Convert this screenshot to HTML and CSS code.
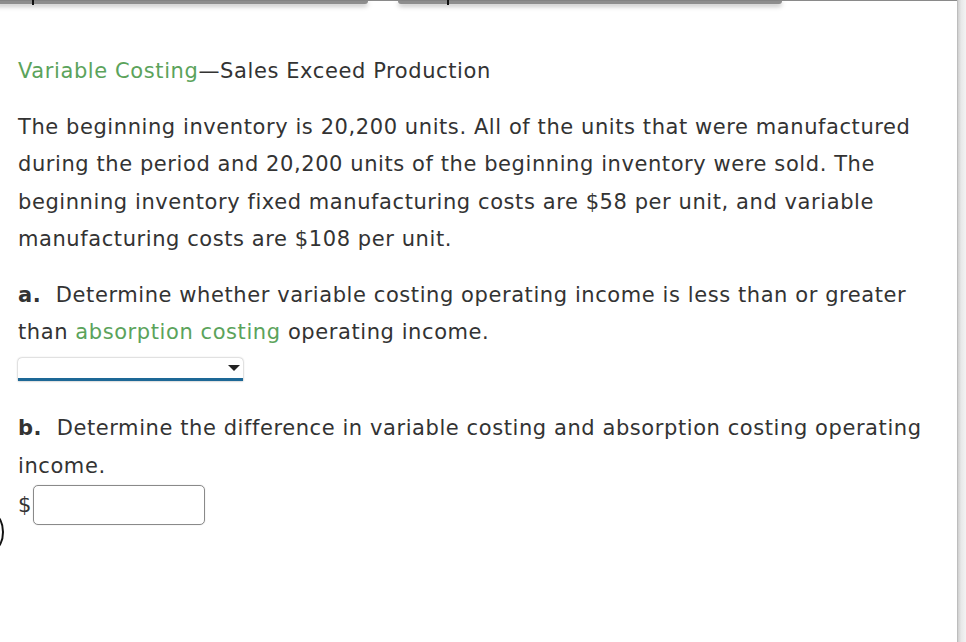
FILE: index.html
```html
<!DOCTYPE html>
<html>
<head>
<meta charset="utf-8">
<link rel="stylesheet" href="styles.css">
</head>
<body>
<div class="topbar">
  <div class="tab tab1"><span class="tick t1"></span></div>
  <div class="tab tab2"><span class="tick t2"></span></div>
</div>
<div class="sidebar-edge"></div>
<main class="content">
  <h1 class="title"><span class="green">Variable Costing</span>—Sales Exceed Production</h1>
  <p class="para">The beginning inventory is 20,200 units. All of the units that were manufactured during the period and 20,200 units of the beginning inventory were sold. The beginning inventory fixed manufacturing costs are $58 per unit, and variable manufacturing costs are $108 per unit.</p>
  <p class="para q"><b>a.</b>&nbsp; Determine whether variable costing operating income is less than or greater than <span class="green">absorption costing</span> operating income.</p>
  <div class="select"><span class="arrow"></span></div>
  <p class="para q qb"><b>b.</b>&nbsp; Determine the difference in variable costing and absorption costing operating income.</p>
  <div class="answer"><span class="dollar">$</span><span class="input"></span></div>
</main>
<span class="arc"></span>
</body>
</html>
```
FILE: styles.css
```css
html, body {
  margin: 0;
  padding: 0;
  background: #fff;
}
body {
  width: 966px;
  height: 642px;
  overflow: hidden;
  position: relative;
  font-family: "DejaVu Sans", Verdana, sans-serif;
  color: #333;
}
.topbar {
  height: 4px;
  border-top: 1px solid #8a8a8a;
  display: flex;
  position: relative;
}
.tab {
  height: 3px;
  background: #8d8d8d;
  border-radius: 0 0 6px 6px;
  box-shadow: 0 2px 5px rgba(0,0,0,0.35);
  position: relative;
}
.tab1 { width: 374px; margin-left: -6px; }
.tab2 { width: 384px; margin-left: 30px; }
.tick {
  position: absolute;
  top: -1px;
  width: 2px;
  height: 5px;
  background: #111;
}
.t1 { left: 38px; }
.t2 { left: 49px; }
.sidebar-edge {
  position: absolute;
  top: 0;
  right: 0;
  width: 8px;
  height: 642px;
  background: linear-gradient(to right, #cfcfcf, #e8e8e8 40%, #f3f3f3);
  border-left: 1px solid #bdbdbd;
}
.content {
  padding: 51px 30px 0 18px;
  width: 908px;
}
.title {
  margin: 0;
  font-size: 21px;
  letter-spacing: 0.6px;
  font-weight: normal;
  line-height: 30px;
  color: #333;
}
.green { color: #5ba35b; }
.para {
  margin: 0;
  font-size: 21px;
  letter-spacing: 0.58px;
  line-height: 37.4px;
}
.title + .para { margin-top: 23px; }
.q { margin-top: 18px; }
.q b { font-weight: bold; }
.select {
  margin-top: 7px;
  width: 225px;
  height: 20px;
  border-radius: 4px 4px 0 0;
  box-shadow: 0 0 2px rgba(0,0,0,0.45);
  border-bottom: 3px solid #1d6896;
  position: relative;
  box-sizing: content-box;
}
.arrow {
  position: absolute;
  right: 3px;
  top: 7px;
  width: 0;
  height: 0;
  border-left: 6px solid transparent;
  border-right: 6px solid transparent;
  border-top: 6px solid #222;
}
.qb { margin-top: 29px; }
.answer {
  display: flex;
  align-items: center;
  margin-top: 0;
}
.dollar {
  font-size: 21px;
  width: 15px;
}
.input {
  width: 170px;
  height: 38px;
  border: 1.5px solid #8a8a8a;
  border-radius: 5px;
  box-shadow: 0 0 1px rgba(0,0,0,0.3);
}
.arc {
  position: absolute;
  left: -14px;
  top: 515px;
  width: 14px;
  height: 30px;
  border: 2.5px solid #111;
  border-radius: 50%;
}
```
